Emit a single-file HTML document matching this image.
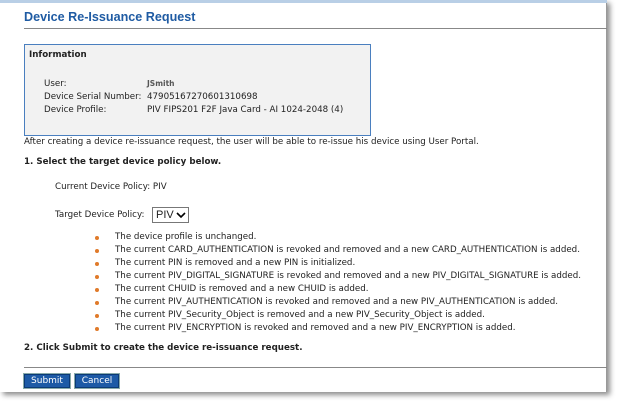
<!DOCTYPE html>
<html><head><style>
*{margin:0;padding:0;box-sizing:border-box}
body{width:619px;height:406px;background:#fff;position:relative;overflow:hidden;font-family:"DejaVu Sans",Verdana,sans-serif;font-size:8.7px;color:#222}
#frame{position:absolute;left:0;top:0;width:607px;height:392px;background:#fff;border-right:1px solid #999;box-shadow:3px 3px 5px rgba(0,0,0,.45)}
#band{position:absolute;left:0;top:0;width:607px;height:3px;background:#b9cfe6}
.a{position:absolute;white-space:nowrap;line-height:10px}
h1{position:absolute;left:24px;top:10px;font-family:"Liberation Sans",Arial,sans-serif;font-size:12.6px;color:#1f5ba3;font-weight:bold}
.hr{position:absolute;left:24px;width:583px;height:1px;background:#888}
#info{position:absolute;left:24px;top:44px;width:347px;height:92px;background:#f2f2f2;border:1px solid #4a7fbf}
b{font-weight:bold}
.dot{position:absolute;left:95px;width:4px;height:4px;border-radius:50%;background:#e07a2a}
.btn{position:absolute;top:374px;height:14px;background:#1d5aa6;color:#fff;border:1px solid #0c3a75;outline:1px solid #8aa;font-size:9px;line-height:12px;text-align:center}
#sel{position:absolute;left:152px;top:207px;width:37px;height:16px;border:1px solid #777;font-size:11px;line-height:14px;font-family:"Liberation Sans",Arial,sans-serif;background:#fff;padding-left:3px}
</style></head><body>
<div id="frame"></div><div id="band"></div>
<h1>Device Re-Issuance Request</h1>
<div class="hr" style="top:28px"></div>
<div id="info"></div>
<div class="a" style="left:29px;top:50px"><b>Information</b></div>
<div class="a" style="left:44px;top:79px">User:</div>
<div class="a" style="left:147px;top:79px;color:#555;font-size:7.5px"><b>JSmith</b></div>
<div class="a" style="left:44px;top:92px">Device Serial Number:</div>
<div class="a" style="left:147px;top:92px">47905167270601310698</div>
<div class="a" style="left:44px;top:105px">Device Profile:</div>
<div class="a" style="left:147px;top:105px">PIV FIPS201 F2F Java Card - AI 1024-2048 (4)</div>
<div class="a" style="left:24px;top:137px">After creating a device re-issuance request, the user will be able to re-issue his device using User Portal.</div>
<div class="a" style="left:24px;top:157px"><b>1. Select the target device policy below.</b></div>
<div class="a" style="left:55px;top:182px">Current Device Policy: PIV</div>
<div class="a" style="left:55px;top:210px">Target Device Policy:</div>
<div id="sel">PIV <svg width="10" height="7" viewBox="0 0 10 7" style="position:absolute;left:23px;top:4px"><path d="M1 1 L5 5 L9 1" fill="none" stroke="#000" stroke-width="1.6"/></svg></div>
<div class="dot" style="top:236px"></div><div class="a" style="left:115px;top:232px">The device profile is unchanged.</div>
<div class="dot" style="top:249px"></div><div class="a" style="left:115px;top:245px">The current CARD_AUTHENTICATION is revoked and removed and a new CARD_AUTHENTICATION is added.</div>
<div class="dot" style="top:262px"></div><div class="a" style="left:115px;top:258px">The current PIN is removed and a new PIN is initialized.</div>
<div class="dot" style="top:275px"></div><div class="a" style="left:115px;top:271px">The current PIV_DIGITAL_SIGNATURE is revoked and removed and a new PIV_DIGITAL_SIGNATURE is added.</div>
<div class="dot" style="top:288px"></div><div class="a" style="left:115px;top:284px">The current CHUID is removed and a new CHUID is added.</div>
<div class="dot" style="top:301px"></div><div class="a" style="left:115px;top:297px">The current PIV_AUTHENTICATION is revoked and removed and a new PIV_AUTHENTICATION is added.</div>
<div class="dot" style="top:314px"></div><div class="a" style="left:115px;top:310px">The current PIV_Security_Object is removed and a new PIV_Security_Object is added.</div>
<div class="dot" style="top:327px"></div><div class="a" style="left:115px;top:323px">The current PIV_ENCRYPTION is revoked and removed and a new PIV_ENCRYPTION is added.</div>
<div class="a" style="left:24px;top:343px"><b>2. Click Submit to create the device re-issuance request.</b></div>
<div class="hr" style="top:367px"></div>
<div class="btn" style="left:24px;width:46px">Submit</div>
<div class="btn" style="left:75px;width:44px">Cancel</div>
</body></html>
